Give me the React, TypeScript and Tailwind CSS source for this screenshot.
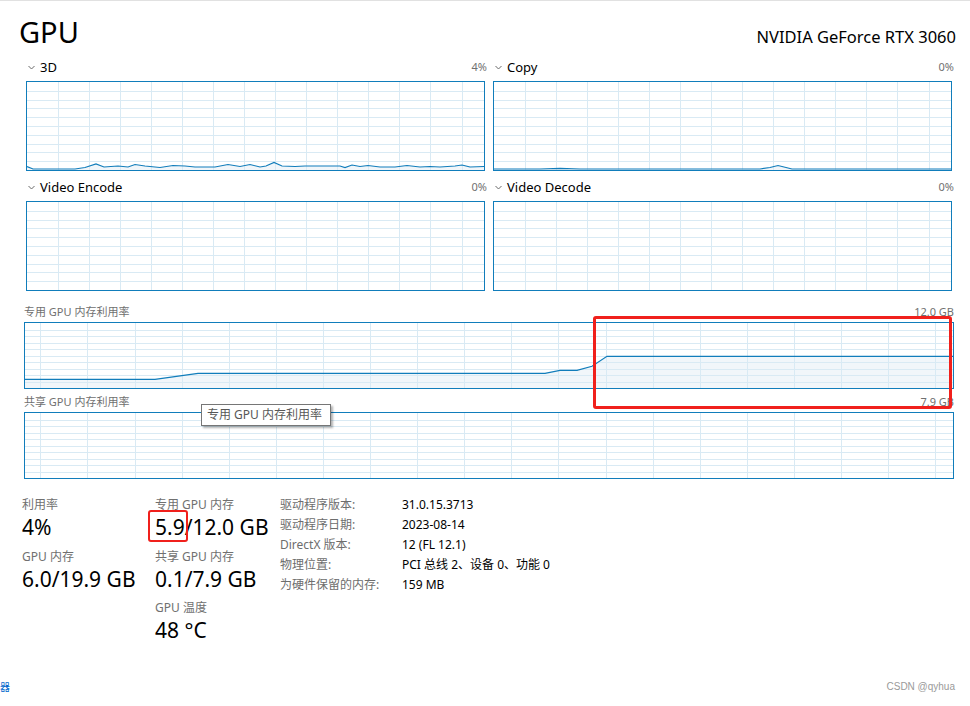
import React from "react";

const BORDER = "#117dbb";
const GRID = "#d9eaf4";
const FILL = "#f1f6fa";

type Pt = [number, number];

function Grid({
  w,
  h,
  rows,
  vStart,
  vStep,
  line,
}: {
  w: number;
  h: number;
  rows: number;
  vStart: number;
  vStep: number;
  line?: Pt[];
}) {
  const hs: number[] = [];
  for (let k = 1; k < rows; k++) hs.push(Math.round((h / rows) * k) + 0.5);
  const vs: number[] = [];
  for (let x = vStart; x < w - 1; x += vStep) vs.push(Math.round(x) + 0.5);
  let poly = "";
  let area = "";
  if (line && line.length) {
    poly = line.map((p) => `${p[0]},${p[1]}`).join(" ");
    area = `0,${h} ${poly} ${w},${h}`;
  }
  return (
    <svg width={w} height={h} className="block" viewBox={`0 0 ${w} ${h}`}>
      {line && <polygon points={area} fill={FILL} />}
      {hs.map((y, i) => (
        <line key={"h" + i} x1={0} x2={w} y1={y} y2={y} stroke={GRID} strokeWidth={1} />
      ))}
      {vs.map((x, i) => (
        <line key={"v" + i} x1={x} x2={x} y1={0} y2={h} stroke={GRID} strokeWidth={1} />
      ))}
      {line && <polyline points={poly} fill="none" stroke={BORDER} strokeWidth={1.2} />}
    </svg>
  );
}

function Chevron() {
  return (
    <svg width="7" height="5" viewBox="0 0 7 5" className="block ml-[2px] mr-[5px]">
      <polyline points="0.5,1 3.5,4 6.5,1" fill="none" stroke="#6b6b6b" strokeWidth="1" />
    </svg>
  );
}

const line3dAbs: Pt[] = [
  [27, 166.5], [33, 169], [75, 169], [85, 167.5], [96, 164], [104, 167], [118, 166], [128, 167],
  [135, 164.5], [145, 166], [160, 167.5], [173, 165.5], [185, 166], [195, 167], [215, 167],
  [228, 164.5], [240, 166.5], [250, 164.5], [260, 167], [266, 166], [274, 162.5], [282, 166],
  [295, 166.5], [305, 166], [340, 166], [345, 167.5], [352, 165], [360, 166.5], [368, 165.5],
  [380, 167], [395, 167], [407, 165.5], [420, 167], [430, 166.5], [440, 167], [455, 166],
  [462, 165], [470, 167], [484, 166.5],
];
const line3d: Pt[] = line3dAbs.map(([x, y]) => [x - 27, y - 82]);

const lineCopyAbs: Pt[] = [
  [494, 169], [540, 169], [560, 168.3], [580, 169], [760, 169], [770, 167.5], [778, 165.5],
  [786, 167.5], [792, 169], [951, 169],
];
const lineCopy: Pt[] = lineCopyAbs.map(([x, y]) => [x - 494, y - 82]);

const memLine: Pt[] = [
  [0, 56.3], [130, 56.3], [173, 50.3], [520, 50.3], [535, 47.3], [552, 47.3], [567, 43.3],
  [582, 33.3], [928, 33.3],
];

function SmallChart({ label, pct, line }: { label: string; pct: string; line?: Pt[] }) {
  return (
    <div className="flex flex-col">
      <div className="flex items-center justify-between h-[20px] leading-[20px]">
        <div className="flex items-center">
          <Chevron />
          <span className="text-[13px] text-black">{label}</span>
        </div>
        <span className="text-[11px] text-[#707070] -mr-[2px]">{pct}</span>
      </div>
      <div className="mt-[4px] h-[90px] border border-[#117dbb] overflow-hidden">
        <Grid w={457} h={88} rows={10} vStart={30.5} vStep={31.08} line={line} />
      </div>
    </div>
  );
}

function MemChart({ label, value, line }: { label: string; value: string; line?: Pt[] }) {
  return (
    <div className="flex flex-col">
      <div className="flex justify-between h-[16px] leading-[16px] text-[11px] text-[#707070]">
        <span>{label}</span>
        <span>{value}</span>
      </div>
      <div className="mt-[2px] h-[67px] border border-[#117dbb] overflow-hidden">
        <Grid w={928} h={65} rows={10} vStart={15.3} vStep={47.1} line={line} />
      </div>
    </div>
  );
}

function Stat({ label, value }: { label: string; value: string }) {
  return (
    <div className="flex flex-col">
      <div className="h-[16px] leading-[16px] text-[12px] text-[#707070] whitespace-nowrap">{label}</div>
      <div className="h-[28px] leading-[28px] text-[21px] text-black whitespace-nowrap">{value}</div>
    </div>
  );
}

const details: [string, string][] = [
  ["驱动程序版本:", "31.0.15.3713"],
  ["驱动程序日期:", "2023-08-14"],
  ["DirectX 版本:", "12 (FL 12.1)"],
  ["物理位置:", "PCI 总线 2、设备 0、功能 0"],
  ["为硬件保留的内存:", "159 MB"],
];

export default function App() {
  return (
    <div className="relative w-[970px] h-[706px] overflow-hidden bg-white border-t border-[#e1e1e1] flex flex-col font-[family-name:'Noto_Sans','Noto_Sans_CJK_SC',sans-serif]">
      {/* Title */}
      <div className="mt-[13px] flex items-baseline justify-between pl-[19px] pr-[14px] h-[36px] leading-[36px]">
        <span className="text-[29px] text-black">GPU</span>
        <span className="text-[16.5px] text-black">NVIDIA GeForce RTX 3060</span>
      </div>

      {/* Engine charts */}
      <div className="mt-[7px] pl-[26px] pr-[18px] grid grid-cols-2 gap-x-[8px] gap-y-[6px]">
        <SmallChart label="3D" pct="4%" line={line3d} />
        <SmallChart label="Copy" pct="0%" line={lineCopy} />
        <SmallChart label="Video Encode" pct="0%" />
        <SmallChart label="Video Decode" pct="0%" />
      </div>

      {/* Memory charts */}
      <div className="mt-[13px] pl-[24px] pr-[16px] flex flex-col gap-[5px]">
        <MemChart label="专用 GPU 内存利用率" value="12.0 GB" line={memLine} />
        <MemChart label="共享 GPU 内存利用率" value="7.9 GB" />
      </div>

      {/* Stats */}
      <div className="mt-[15.5px] pl-[22px] flex items-start">
        <div className="w-[133px] pt-[2.5px] flex flex-col gap-[7.5px]">
          <Stat label="利用率" value="4%" />
          <Stat label="GPU 内存" value="6.0/19.9 GB" />
        </div>
        <div className="w-[125px] pt-[2.5px] flex flex-col gap-[7.5px]">
          <Stat label="专用 GPU 内存" value="5.9/12.0 GB" />
          <Stat label="共享 GPU 内存" value="0.1/7.9 GB" />
          <Stat label="GPU 温度" value="48 °C" />
        </div>
        <div className="grid grid-cols-[122px_auto] text-[12px] leading-[20px]">
          {details.map(([k, v]) => (
            <React.Fragment key={k}>
              <div className="text-[#6d6d6d] whitespace-nowrap">{k}</div>
              <div className="text-black whitespace-nowrap">{v}</div>
            </React.Fragment>
          ))}
        </div>
      </div>

      {/* Bottom */}
      <div className="mt-auto mb-[11px] flex items-center justify-between">
        <span className="text-[10px] leading-[16px] text-[#0066cc] whitespace-nowrap">器</span>
        <span className="pr-[15px] text-[10px] leading-[14px] text-[#9a9a9a] font-[family-name:'Liberation_Sans',sans-serif]">
          CSDN @qyhua
        </span>
      </div>

      {/* Tooltip */}
      <div className="absolute left-[201px] top-[403px] w-[130px] h-[22px] bg-white border border-[#767676] shadow-[2px_2px_2px_rgba(0,0,0,0.3)] px-[5px] text-[12px] leading-[20px] text-[#575757] whitespace-nowrap">
        专用 GPU 内存利用率
      </div>

      {/* Annotations */}
      <div className="absolute left-[593px] top-[315px] w-[359px] h-[93px] border-[3px] border-[#f0201c] rounded-[3px]" />
      <div className="absolute left-[148px] top-[509px] w-[40px] h-[32px] border-[2px] border-[#f0201c] rounded-[3px]" />
    </div>
  );
}
